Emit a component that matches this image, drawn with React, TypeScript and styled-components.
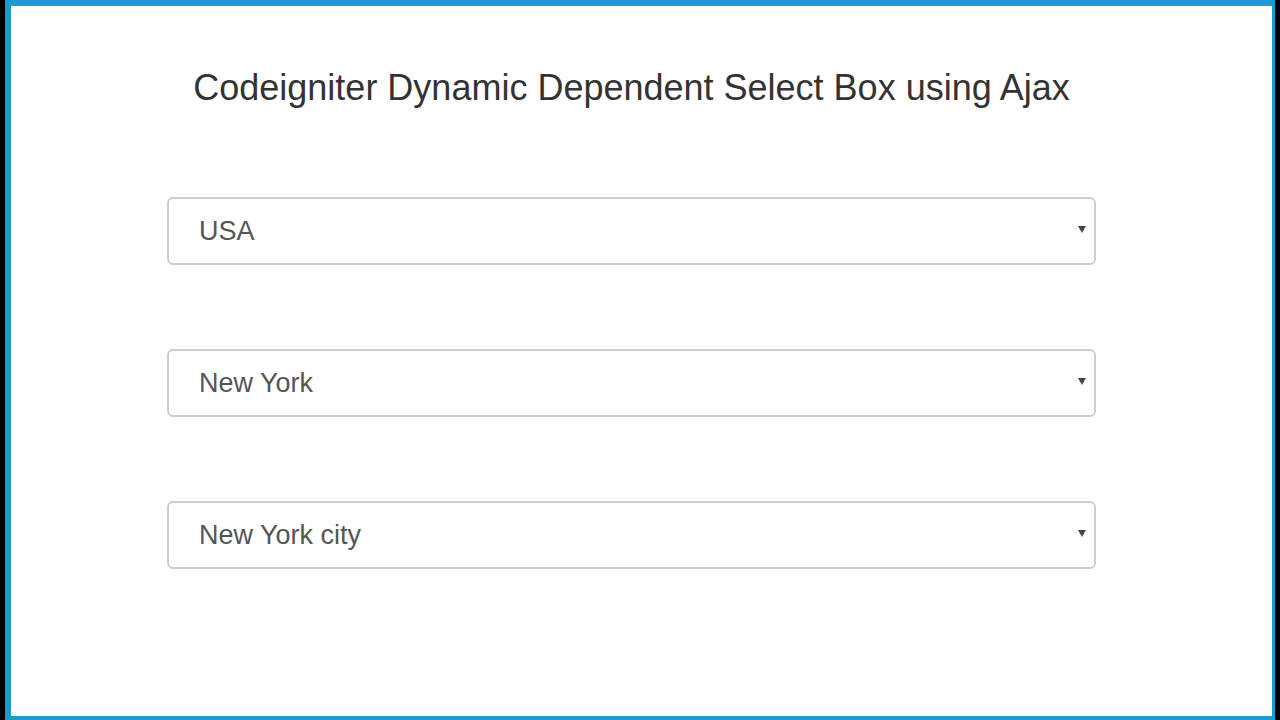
import React from 'react';
import styled, { createGlobalStyle } from 'styled-components';

const GlobalStyle = createGlobalStyle`
  html, body {
    margin: 0;
    padding: 0;
    background: #000;
  }
  * {
    box-sizing: border-box;
  }
`;

const Screen = styled.div`
  width: 1280px;
  height: 720px;
  border-left: 5px solid #000;
  border-right: 5px solid #000;
  background: #000;
`;

const Frame = styled.div`
  height: 100%;
  background: #fff;
  border-top: 6px solid #1a9ccf;
  border-left: 6px solid #1a9ccf;
  border-right: 3px solid #1a9ccf;
  border-bottom: 4px solid #1a9ccf;
  padding-left: 156px;
`;

const Column = styled.div`
  width: 929px;
  display: flex;
  flex-direction: column;
`;

const Title = styled.h3`
  margin: 58px 0 0;
  height: 48px;
  line-height: 48px;
  text-align: center;
  font-family: 'Liberation Sans', Arial, sans-serif;
  font-weight: 400;
  font-size: 36px;
  color: #333;
`;

const Fields = styled.div`
  margin-top: 85px;
  display: flex;
  flex-direction: column;
  gap: 84px;
`;

const SelectWrap = styled.div`
  position: relative;
  height: 68px;

  &::after {
    content: '';
    position: absolute;
    right: 10px;
    top: 29px;
    border-left: 4px solid transparent;
    border-right: 4px solid transparent;
    border-top: 7px solid #444;
    pointer-events: none;
  }
`;

const Select = styled.select`
  appearance: none;
  width: 100%;
  height: 100%;
  padding: 0 30px 0 30px;
  border: 2px solid #cdcdcd;
  border-radius: 6px;
  background: #fff;
  font-family: 'Liberation Sans', Arial, sans-serif;
  font-size: 27px;
  color: #555;
  outline: none;
`;

interface DropdownProps {
  value: string;
}

const Dropdown: React.FC<DropdownProps> = ({ value }) => (
  <SelectWrap>
    <Select defaultValue={value}>
      <option value={value}>{value}</option>
    </Select>
  </SelectWrap>
);

export default function App() {
  return (
    <>
      <GlobalStyle />
      <Screen>
        <Frame>
          <Column>
            <Title>Codeigniter Dynamic Dependent Select Box using Ajax</Title>
            <Fields>
              <Dropdown value="USA" />
              <Dropdown value="New York" />
              <Dropdown value="New York city" />
            </Fields>
          </Column>
        </Frame>
      </Screen>
    </>
  );
}
